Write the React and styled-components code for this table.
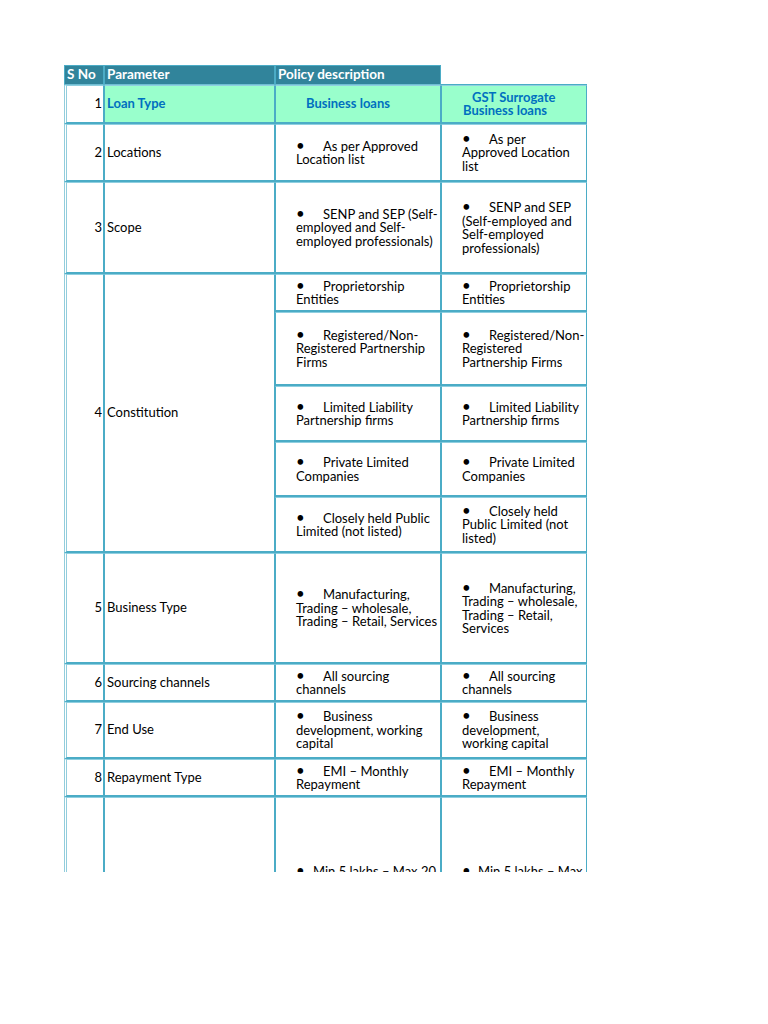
import React from 'react';
import styled, { createGlobalStyle } from 'styled-components';

const GlobalStyle = createGlobalStyle`
	html, body {
		margin: 0;
		padding: 0;
		background: #ffffff;
	}
	body {
		font-family: Lato, "Open Sans", sans-serif;
		color: #000000;
	}
`;

const Page = styled.div`
	width: 768px;
	height: 1024px;
	padding: 65px 0 0 64px;
	box-sizing: border-box;
	background: #ffffff;
`;

const Sheet = styled.div`
	height: 807px;
	overflow: hidden;
	width: 524px;
`;

const Grid = styled.div`
	display: grid;
	grid-template-columns: 40px 171px 166px 146px;
	grid-template-rows: 20px 39px 58px 92px 38px 74px 56px 55px 56px 111px 38px 57px 38px 170px;
	font-size: 13px;
	line-height: 13.5px;
`;

const HeadCell = styled.div`
	background: #31849b;
	color: #ffffff;
	font-weight: 700;
	font-size: 13.5px;
	padding-left: 2px;
	display: flex;
	align-items: center;
	border: 1px solid #4bacc6;
	border-bottom-color: #6fbdd3;
	box-sizing: border-box;
`;

const Blank = styled.div`
	border-bottom: 1px solid #4bacc6;
`;

const Cell = styled.div`
	grid-row: span ${(p) => p.$span || 1};
	background: ${(p) => (p.$head ? '#99ffcc' : '#ffffff')};
	color: ${(p) => (p.$head ? '#0070c0' : '#000000')};
	font-weight: ${(p) => (p.$head ? 700 : 400)};
	border-left: 1px solid #4bacc6;
	border-right: 1px solid #4bacc6;
	border-top: 1px solid #8fcfe0;
	border-bottom: 2px solid #4bacc6;
	box-sizing: border-box;
	display: flex;
	flex-direction: column;
	justify-content: center;
	white-space: nowrap;
	overflow: hidden;
`;

const NumCell = styled(Cell)`
	align-items: flex-end;
	padding-right: 1px;
	color: #000000;
	font-weight: 400;
	border-left: 3px double #92cddc;
`;

const ParamCell = styled(Cell)`
	padding-left: 2px;
`;

const DescCell = styled(Cell)`
	padding-left: ${(p) => p.$pad}px;
`;

const TopLine = styled.div`
	padding-left: ${(p) => p.$indent || 0}px;
`;

const Bullet = styled.span`
	display: inline-block;
	width: ${(p) => p.$w}px;
	font-size: 15px;
	line-height: 13px;
`;

const rows = [
	{ no: 2, param: 'Locations', a: ['As per Approved', 'Location list'], b: ['As per', 'Approved Location', 'list'] },
	{
		no: 3,
		param: 'Scope',
		a: ['SENP and SEP (Self-', 'employed and Self-', 'employed professionals)'],
		b: ['SENP and SEP', '(Self-employed and', 'Self-employed', 'professionals)'],
	},
	{
		no: 4,
		param: 'Constitution',
		subs: [
			{ a: ['Proprietorship', 'Entities'], b: ['Proprietorship', 'Entities'] },
			{ a: ['Registered/Non-', 'Registered Partnership', 'Firms'], b: ['Registered/Non-', 'Registered', 'Partnership Firms'] },
			{ a: ['Limited Liability', 'Partnership firms'], b: ['Limited Liability', 'Partnership firms'] },
			{ a: ['Private Limited', 'Companies'], b: ['Private Limited', 'Companies'] },
			{ a: ['Closely held Public', 'Limited (not listed)'], b: ['Closely held', 'Public Limited (not', 'listed)'] },
		],
	},
	{
		no: 5,
		param: 'Business Type',
		a: ['Manufacturing,', 'Trading – wholesale,', 'Trading – Retail, Services'],
		b: ['Manufacturing,', 'Trading – wholesale,', 'Trading – Retail,', 'Services'],
	},
	{ no: 6, param: 'Sourcing channels', a: ['All sourcing', 'channels'], b: ['All sourcing', 'channels'] },
	{
		no: 7,
		param: 'End Use',
		a: ['Business', 'development, working', 'capital'],
		b: ['Business', 'development,', 'working capital'],
	},
	{ no: 8, param: 'Repayment Type', a: ['EMI – Monthly', 'Repayment'], b: ['EMI – Monthly', 'Repayment'] },
];

const Desc = ({ lines, pad, bw }) => (
	<DescCell $pad={pad}>
		<TopLine>
			<Bullet $w={bw}>•</Bullet>
			{lines[0]}
		</TopLine>
		{lines.slice(1).map((l) => (
			<div key={l}>{l}</div>
		))}
	</DescCell>
);

const LastDesc = styled(Cell)`
	padding-left: ${(p) => p.$pad}px;
	justify-content: flex-start;
	padding-top: 66px;
`;

const App = () => {
	return (
		<Page>
			<GlobalStyle />
			<Sheet>
				<Grid>
					<HeadCell>S No</HeadCell>
					<HeadCell>Parameter</HeadCell>
					<HeadCell>Policy description</HeadCell>
					<Blank />

					<NumCell>1</NumCell>
					<ParamCell $head>Loan Type</ParamCell>
					<DescCell $head $pad={30}>Business loans</DescCell>
					<DescCell $head $pad={21}>
						<TopLine $indent={9}>GST Surrogate</TopLine>
						<div>Business loans</div>
					</DescCell>

					{rows.map((r) =>
						r.subs ? (
							<React.Fragment key={r.no}>
								<NumCell $span={r.subs.length}>{r.no}</NumCell>
								<ParamCell $span={r.subs.length}>{r.param}</ParamCell>
								{r.subs.map((s, i) => (
									<React.Fragment key={i}>
										<Desc lines={s.a} pad={20} bw={27} />
										<Desc lines={s.b} pad={20} bw={27} />
									</React.Fragment>
								))}
							</React.Fragment>
						) : (
							<React.Fragment key={r.no}>
								<NumCell>{r.no}</NumCell>
								<ParamCell>{r.param}</ParamCell>
								<Desc lines={r.a} pad={20} bw={27} />
								<Desc lines={r.b} pad={20} bw={27} />
							</React.Fragment>
						)
					)}

					<NumCell />
					<ParamCell />
					<LastDesc $pad={20}>
						<TopLine>
							<Bullet $w={17}>•</Bullet>
							Min 5 lakhs – Max 20
						</TopLine>
						<div>lakhs</div>
					</LastDesc>
					<LastDesc $pad={20}>
						<TopLine>
							<Bullet $w={16}>•</Bullet>
							Min 5 lakhs – Max
						</TopLine>
						<div>20 lakhs</div>
					</LastDesc>
				</Grid>
			</Sheet>
		</Page>
	);
};

export default App;
